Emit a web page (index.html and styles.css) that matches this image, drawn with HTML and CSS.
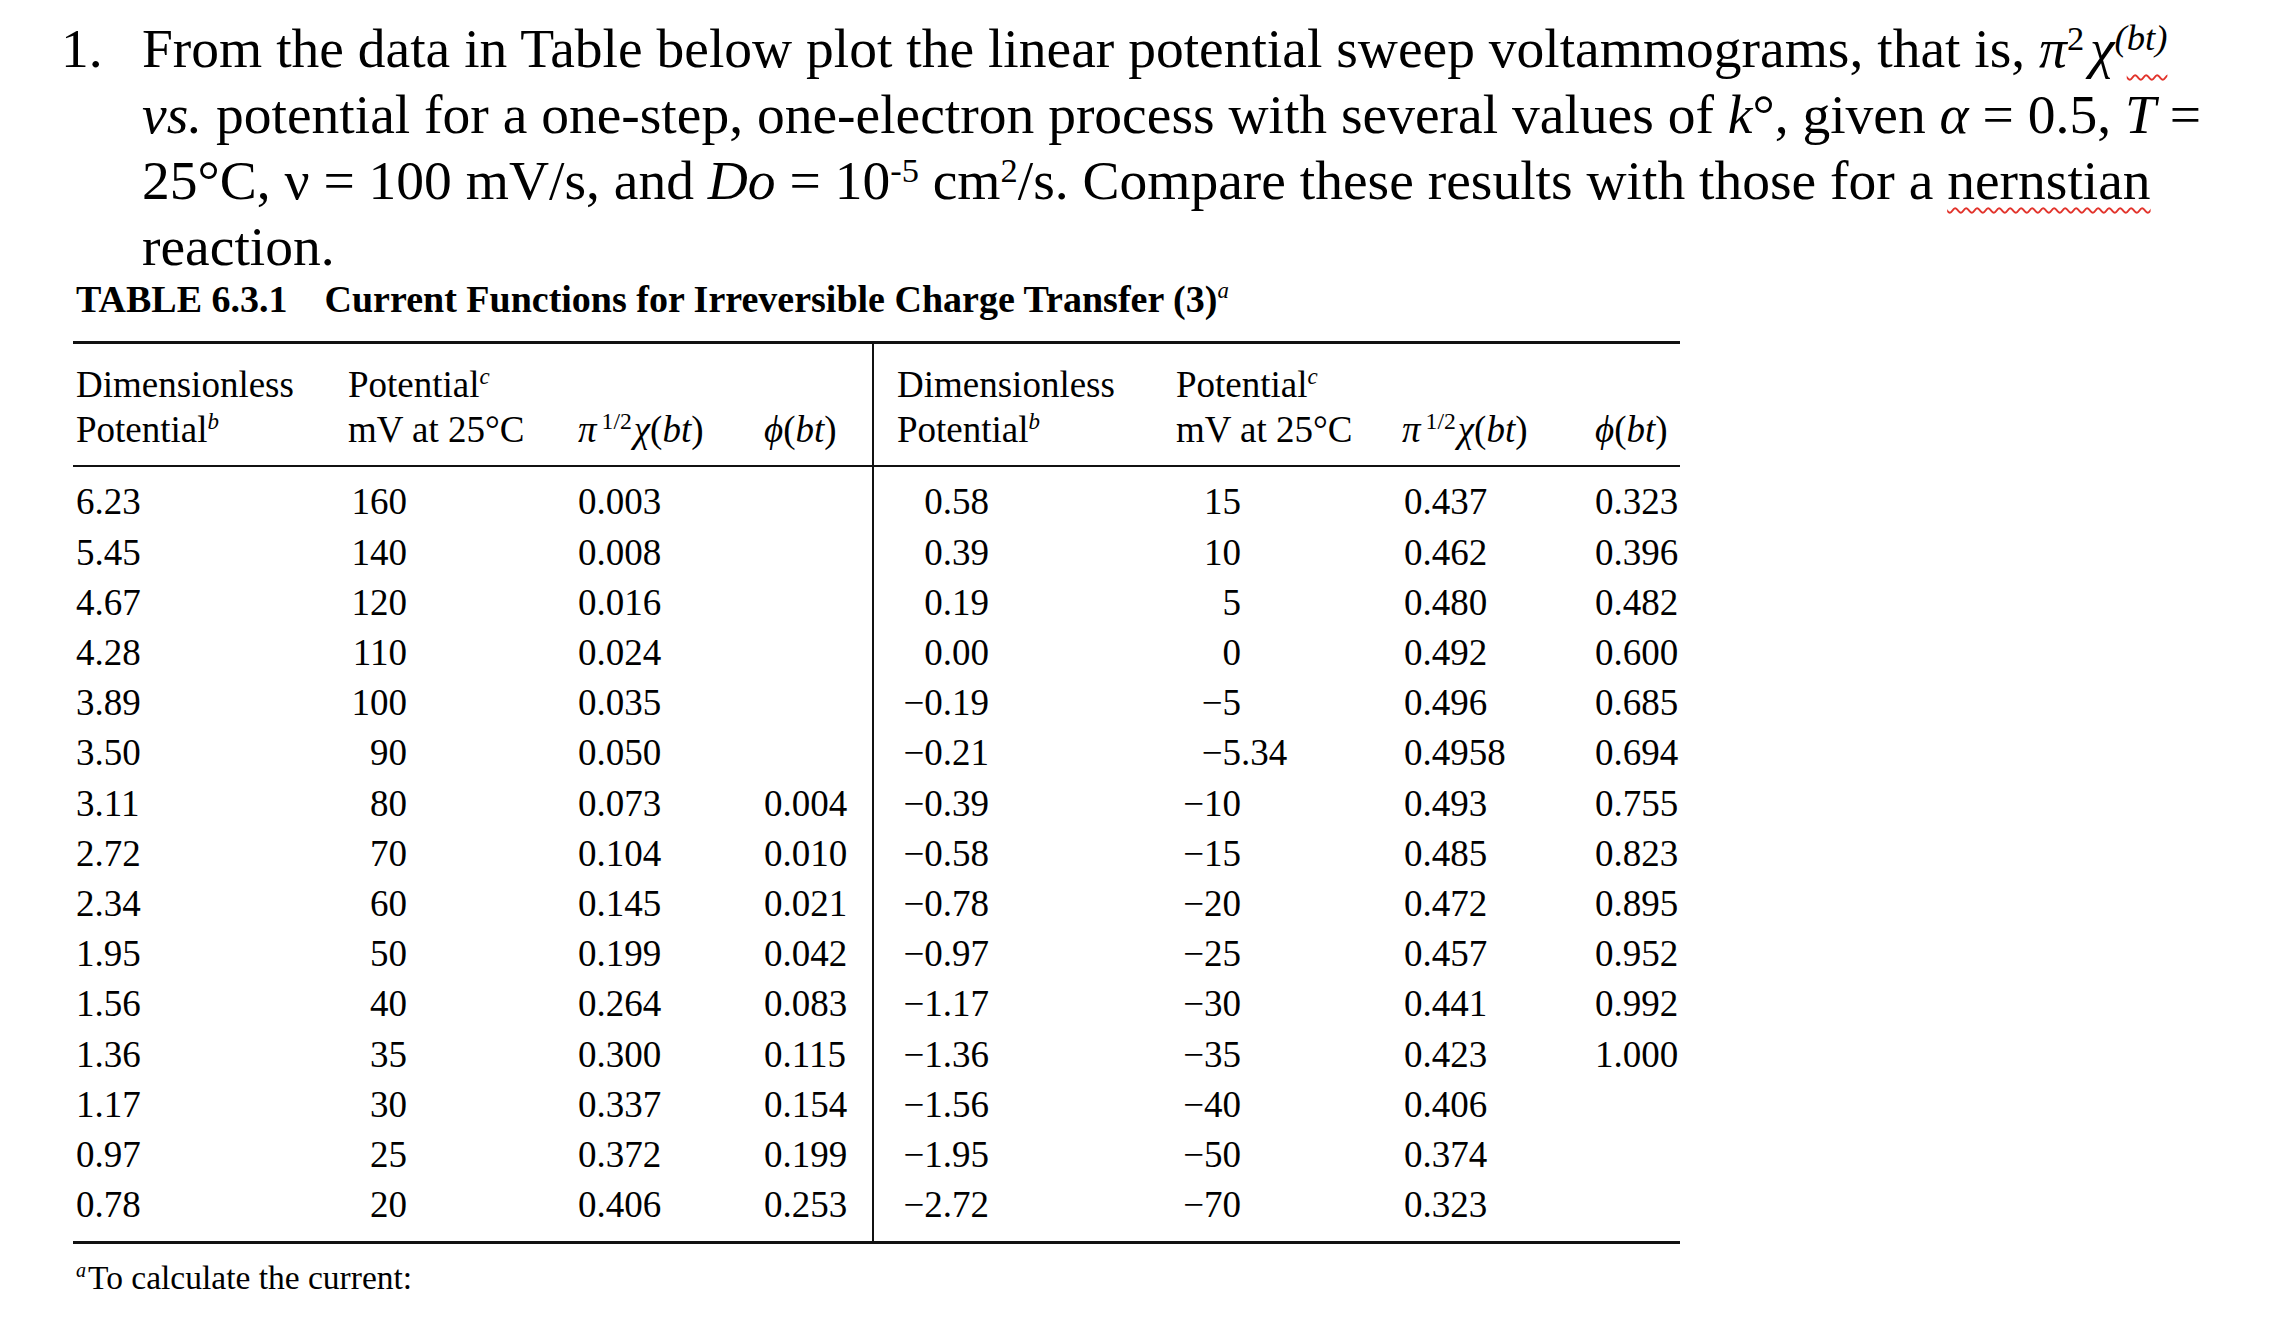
FILE: index.html
```html
<!DOCTYPE html>
<html lang="en">
<head>
<meta charset="utf-8">
<title>Table 6.3.1</title>
<link rel="stylesheet" href="styles.css">
</head>
<body>
<div class="page">
  <div class="problem">
    <span class="num">1.</span>
    <p class="text">From the data in Table below plot the linear potential sweep voltammograms, that is, <i>π</i><sup class="sq">2</sup><i>χ</i><sup class="bt"><i>(<span class="spell-sm">bt)</span></i></sup><br><i>vs.</i> potential for a one-step, one-electron process with several values of <i>k</i>°, given <i>α</i> = 0.5, <i>T</i> =<br>25°C, ν = 100 mV/s, and <i>Do</i> = 10<sup>-5</sup> cm<sup>2</sup>/s. Compare these results with those for a <span class="spell">nernstian</span><br>reaction.</p>
  </div>

  <div class="caption"><b class="cap-num">TABLE 6.3.1</b><b>Current Functions for Irreversible Charge Transfer (3)<sup><i>a</i></sup></b></div>

  <table class="data">
    <thead>
      <tr>
        <th class="c1">Dimensionless<br>Potential<sup><i>b</i></sup></th>
        <th class="c2">Potential<sup><i>c</i></sup><br>mV at 25°C</th>
        <th class="c3"><i>π</i><sup class="half">1/2</sup><i>χ</i>(<i>bt</i>)</th>
        <th class="c4"><i>ϕ</i>(<i>bt</i>)</th>
        <th class="c5">Dimensionless<br>Potential<sup><i>b</i></sup></th>
        <th class="c6">Potential<sup><i>c</i></sup><br>mV at 25°C</th>
        <th class="c7"><i>π</i><sup class="half">1/2</sup><i>χ</i>(<i>bt</i>)</th>
        <th class="c8"><i>ϕ</i>(<i>bt</i>)</th>
      </tr>
    </thead>
    <tbody>
      <tr><td class="c1">6.23</td><td class="c2">160</td><td class="c3">0.003</td><td class="c4"></td><td class="c5">0.58</td><td class="c6">15</td><td class="c7">0.437</td><td class="c8">0.323</td></tr>
      <tr><td class="c1">5.45</td><td class="c2">140</td><td class="c3">0.008</td><td class="c4"></td><td class="c5">0.39</td><td class="c6">10</td><td class="c7">0.462</td><td class="c8">0.396</td></tr>
      <tr><td class="c1">4.67</td><td class="c2">120</td><td class="c3">0.016</td><td class="c4"></td><td class="c5">0.19</td><td class="c6">5</td><td class="c7">0.480</td><td class="c8">0.482</td></tr>
      <tr><td class="c1">4.28</td><td class="c2">110</td><td class="c3">0.024</td><td class="c4"></td><td class="c5">0.00</td><td class="c6">0</td><td class="c7">0.492</td><td class="c8">0.600</td></tr>
      <tr><td class="c1">3.89</td><td class="c2">100</td><td class="c3">0.035</td><td class="c4"></td><td class="c5">−0.19</td><td class="c6">−5</td><td class="c7">0.496</td><td class="c8">0.685</td></tr>
      <tr><td class="c1">3.50</td><td class="c2">90</td><td class="c3">0.050</td><td class="c4"></td><td class="c5">−0.21</td><td class="c6">−5<span class="hang">.34</span></td><td class="c7">0.4958</td><td class="c8">0.694</td></tr>
      <tr><td class="c1">3.11</td><td class="c2">80</td><td class="c3">0.073</td><td class="c4">0.004</td><td class="c5">−0.39</td><td class="c6">−10</td><td class="c7">0.493</td><td class="c8">0.755</td></tr>
      <tr><td class="c1">2.72</td><td class="c2">70</td><td class="c3">0.104</td><td class="c4">0.010</td><td class="c5">−0.58</td><td class="c6">−15</td><td class="c7">0.485</td><td class="c8">0.823</td></tr>
      <tr><td class="c1">2.34</td><td class="c2">60</td><td class="c3">0.145</td><td class="c4">0.021</td><td class="c5">−0.78</td><td class="c6">−20</td><td class="c7">0.472</td><td class="c8">0.895</td></tr>
      <tr><td class="c1">1.95</td><td class="c2">50</td><td class="c3">0.199</td><td class="c4">0.042</td><td class="c5">−0.97</td><td class="c6">−25</td><td class="c7">0.457</td><td class="c8">0.952</td></tr>
      <tr><td class="c1">1.56</td><td class="c2">40</td><td class="c3">0.264</td><td class="c4">0.083</td><td class="c5">−1.17</td><td class="c6">−30</td><td class="c7">0.441</td><td class="c8">0.992</td></tr>
      <tr><td class="c1">1.36</td><td class="c2">35</td><td class="c3">0.300</td><td class="c4">0.115</td><td class="c5">−1.36</td><td class="c6">−35</td><td class="c7">0.423</td><td class="c8">1.000</td></tr>
      <tr><td class="c1">1.17</td><td class="c2">30</td><td class="c3">0.337</td><td class="c4">0.154</td><td class="c5">−1.56</td><td class="c6">−40</td><td class="c7">0.406</td><td class="c8"></td></tr>
      <tr><td class="c1">0.97</td><td class="c2">25</td><td class="c3">0.372</td><td class="c4">0.199</td><td class="c5">−1.95</td><td class="c6">−50</td><td class="c7">0.374</td><td class="c8"></td></tr>
      <tr><td class="c1">0.78</td><td class="c2">20</td><td class="c3">0.406</td><td class="c4">0.253</td><td class="c5">−2.72</td><td class="c6">−70</td><td class="c7">0.323</td><td class="c8"></td></tr>
    </tbody>
  </table>

  <p class="foot"><sup><i>a</i></sup>To calculate the current:</p>
</div>
</body>
</html>
```

FILE: styles.css
```css
html, body {
  margin: 0;
  padding: 0;
  background: #fff;
}

body {
  font-family: "Liberation Serif", "Times New Roman", serif;
  color: #000;
}

.page {
  padding-top: 16px;
}

/* ---------- problem statement ---------- */
.problem {
  display: flex;
  padding-left: 61px;
  font-size: 55.5px;
  line-height: 66px;
}

.num {
  flex: none;
  width: 81px;
}

.text {
  margin: 0;
  white-space: nowrap;
}

.text sup {
  font-size: 0.62em;
  line-height: 0;
  vertical-align: 17px;
}

.text sup.sq {
  margin-right: 6px;
}

.text sup.bt {
  font-size: 0.66em;
}

.spell {
  text-decoration: underline wavy #e2332b;
  text-decoration-thickness: 1.5px;
  text-underline-offset: 8px;
}

.spell-sm {
  text-decoration: underline wavy #e2332b;
  text-decoration-thickness: 1.5px;
  text-underline-offset: 24px;
}

/* ---------- caption ---------- */
.caption {
  margin: -1px 0 0 76px;
  font-size: 38px;
  line-height: 40px;
  white-space: nowrap;
}

.cap-num {
  margin-right: 37px;
}

.caption sup {
  font-size: 0.6em;
  line-height: 0;
  vertical-align: 14px;
  font-weight: normal;
}

/* ---------- table ---------- */
.data {
  margin: 22px 0 0 73px;
  width: 1607px;
  table-layout: fixed;
  border-collapse: separate;
  border-spacing: 0;
  font-size: 37px;
}

.data th,
.data td {
  box-sizing: border-box;
  padding: 0;
  white-space: nowrap;
}

.data th {
  font-weight: normal;
  text-align: left;
  vertical-align: bottom;
  line-height: 45px;
  padding-top: 18px;
  padding-bottom: 13px;
  border-top: 3px solid #111;
  border-bottom: 2px solid #111;
}

.data th sup {
  font-size: 0.62em;
  line-height: 0;
  vertical-align: 13px;
}

.data th sup.half {
  font-size: 0.64em;
  margin: 0 2px 0 5px;
}

.data td {
  line-height: 50.2px;
  vertical-align: baseline;
}

.data tbody tr:first-child td {
  padding-top: 10.4px;
}

.data tbody tr:last-child td {
  padding-bottom: 10.6px;
  border-bottom: 3px solid #111;
}

.c1 { width: 275px; padding-left: 3px !important; }
.c2 { width: 230px; }
.c3 { width: 186px; }
.c4 { width: 110px; border-right: 2px solid #111; }
.c5 { width: 302px; }
.c6 { width: 226px; }
.c7 { width: 193px; }
.c8 { width: 85px; }

th.c5 { padding-left: 23px; }

td.c2 { text-align: right; padding-right: 171px; }
td.c5 { text-align: right; padding-right: 187px; }
td.c6 { text-align: right; padding-right: 161px; }
td.c7 { padding-left: 2px; }

.hang {
  margin-right: -1.25em;
}

/* ---------- footnote ---------- */
.foot {
  margin: 16px 0 0 76px;
  font-size: 33.5px;
  line-height: 36px;
}

.foot sup {
  font-size: 0.6em;
  line-height: 0;
  vertical-align: 12px;
  margin-right: 2px;
}
```
